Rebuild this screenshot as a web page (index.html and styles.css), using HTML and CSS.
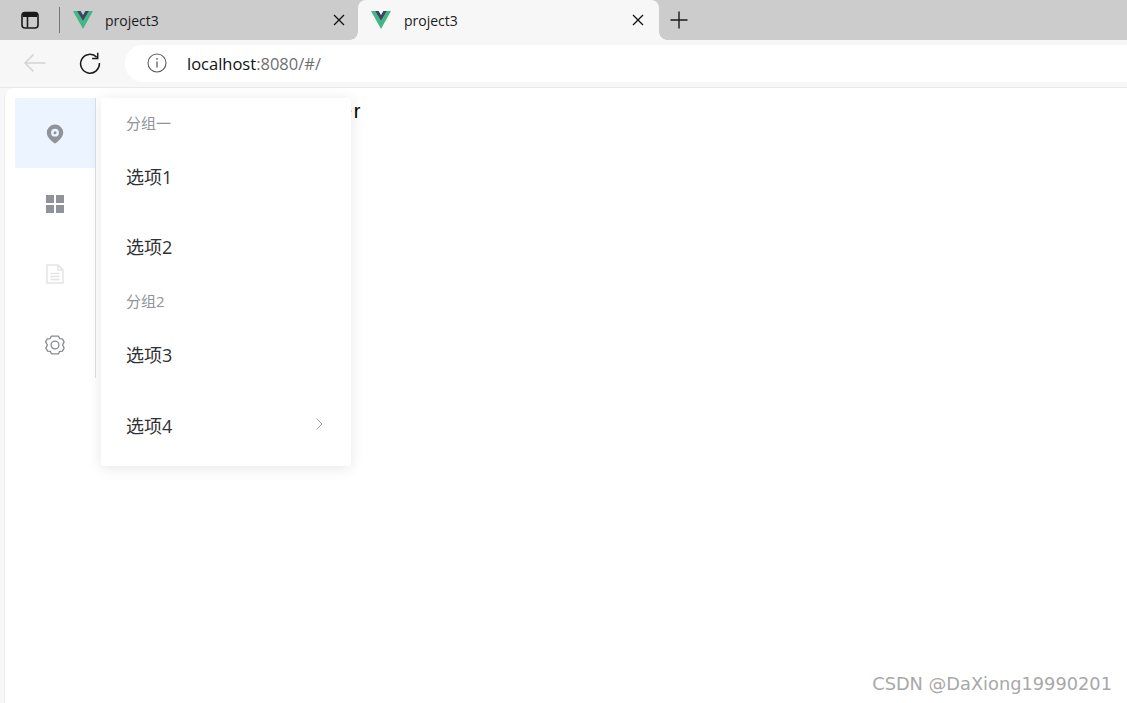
FILE: index.html
```html
<!DOCTYPE html>
<html lang="zh">
<head>
<meta charset="utf-8">
<title>project3</title>
<link rel="stylesheet" href="styles.css">
</head>
<body>
<div class="tabstrip">
  <div class="strip-btn">
    <svg width="20" height="20" viewBox="0 0 20 20"><rect x="2" y="2.5" width="16" height="15.5" rx="3" fill="none" stroke="#1a1a1a" stroke-width="1.6"/><path d="M3 3h14v4H3z" fill="#1a1a1a"/><path d="M7.5 7v10.5" stroke="#1a1a1a" stroke-width="1.6"/></svg>
  </div>
  <div class="strip-sep"></div>
  <div class="tab">
    <svg class="vue" width="20" height="18" viewBox="0 0 20 18"><path d="M0 0h4l6 10 6-10h4L10 18z" fill="#41b883"/><path d="M4 0h3.6L10 4l2.4-4H16l-6 10z" fill="#35495e"/></svg>
    <span class="tab-title">project3</span>
    <svg class="close" width="12" height="12" viewBox="0 0 12 12"><path d="M1 1l10 10M11 1L1 11" stroke="#111" stroke-width="1.3"/></svg>
  </div>
  <div class="tab tab-active">
    <svg class="vue" width="20" height="18" viewBox="0 0 20 18"><path d="M0 0h4l6 10 6-10h4L10 18z" fill="#41b883"/><path d="M4 0h3.6L10 4l2.4-4H16l-6 10z" fill="#35495e"/></svg>
    <span class="tab-title">project3</span>
    <svg class="close" width="12" height="12" viewBox="0 0 12 12"><path d="M1 1l10 10M11 1L1 11" stroke="#111" stroke-width="1.3"/></svg>
  </div>
  <div class="newtab">
    <svg width="18" height="18" viewBox="0 0 18 18"><path d="M9 0.5v17M0.5 9h17" stroke="#1a1a1a" stroke-width="1.4"/></svg>
  </div>
</div>
<div class="toolbar">
  <svg class="tool-back" width="24" height="20" viewBox="0 0 24 20"><path d="M22.500 10H2M10.500 1.500L2 10l8.500 8.500" fill="none" stroke="#d4d4d4" stroke-width="1.500"/></svg>
  <svg class="tool-reload" width="22" height="22" viewBox="0 0 22 22"><path d="M17.800 5.200A9.400 9.400 0 1 0 20.400 11" fill="none" stroke="#1a1a1a" stroke-width="1.500"/><path d="M18.700 0.800v5.600h-5.600" fill="none" stroke="#1a1a1a" stroke-width="1.500"/></svg>
  <div class="address">
    <svg class="info" width="20" height="20" viewBox="0 0 20 20"><circle cx="10" cy="10" r="9" fill="none" stroke="#5c5c5c" stroke-width="1.100"/><path d="M10 8.500v6" stroke="#5c5c5c" stroke-width="1.300"/><circle cx="10" cy="5.800" r="0.900" fill="#5c5c5c"/></svg>
    <span class="host">localhost</span><span class="port">:8080/#/</span>
  </div>
</div>
<div class="viewport">
  <aside class="sidebar">
    <div class="side-item side-item-active">
      <svg width="18" height="20" viewBox="0 0 18 20"><path fill-rule="evenodd" d="M9 .5a8.200 8.200 0 0 1 8.200 8.200c0 4.300-4.700 8.600-8.200 10.800C5.500 17.300.8 13 .8 8.700A8.200 8.200 0 0 1 9 .5zm0 4.300a3.900 3.900 0 1 0 0 7.800 3.900 3.900 0 0 0 0-7.800z" fill="#909399"/><circle cx="9" cy="8.700" r="1.500" fill="#909399"/></svg>
    </div>
    <div class="side-item">
      <svg width="18" height="18" viewBox="0 0 18 18"><path d="M0 0h8v8H0zM10 0h8v8h-8zM0 10h8v8H0zM10 10h8v8h-8z" fill="#909399"/></svg>
    </div>
    <div class="side-item">
      <svg width="18" height="20" viewBox="0 0 18 20"><path d="M1 1h11l5 5v13H1zM12 1v5h5M4.500 9.500h9M4.500 12.500h9M4.500 15.500h9" fill="none" stroke="#e3e3e3" stroke-width="1.400"/></svg>
    </div>
    <div class="side-item side-item-gear">
      <svg width="22" height="22" viewBox="0 0 22 20"><path d="M7.500 1.200h7l1.200 2.400 2.700.2 1.700 3.100-1.500 3.100 1.500 3.100-1.700 3-2.700.2-1.200 2.500h-7l-1.200-2.500-2.700-.2-1.700-3 1.500-3.100L1.600 6.900l1.700-3.100 2.700-.2z" fill="none" stroke="#87898d" stroke-width="1.300" stroke-linejoin="round"/><circle cx="11" cy="10" r="3.900" fill="none" stroke="#87898d" stroke-width="1.300"/></svg>
    </div>
  </aside>
  <main class="main">Main Header</main>
  <div class="popup">
    <div class="group">分组一</div>
    <div class="option">选项1</div>
    <div class="option">选项2</div>
    <div class="group group-second">分组2</div>
    <div class="option option-third">选项3</div>
    <div class="option">选项4
      <svg class="chev" width="8" height="14" viewBox="0 0 8 14"><path d="M1.500 1.500l5.500 5.500-5.500 5.500" fill="none" stroke="#a0a3aa" stroke-width="1"/></svg>
    </div>
  </div>
  <div class="watermark">CSDN @DaXiong19990201</div>
</div>
</body>
</html>
```
FILE: styles.css
```css
* { box-sizing: border-box; }
html, body { margin: 0; height: 100%; overflow: hidden; }
body {
  width: 1127px;
  height: 703px;
  background: #f7f7f7;
  font-family: "Open Sans", "Noto Sans CJK SC", sans-serif;
  display: flex;
  flex-direction: column;
}
.tabstrip {
  height: 40px;
  background: #cccccc;
  display: flex;
  align-items: stretch;
  flex: none;
}
.strip-btn {
  width: 59px;
  display: flex;
  align-items: center;
  padding-left: 20px;
}
.strip-sep {
  width: 1px;
  height: 26px;
  margin-top: 7px;
  background: #777;
}
.tab {
  width: 298px;
  display: flex;
  align-items: center;
  padding: 0 13px 0 13px;
}
.tab-active {
  width: 301px;
  background: #f7f7f7;
  border-radius: 8px 8px 0 0;
  padding: 0 15px 0 13px;
  position: relative;
}
.tab-active::before,
.tab-active::after {
  content: "";
  position: absolute;
  bottom: 0;
  width: 8px;
  height: 8px;
}
.tab-active::before {
  left: -8px;
  background: radial-gradient(circle at 0 0, #cccccc 7.500px, #f7f7f7 8px);
}
.tab-active::after {
  right: -8px;
  background: radial-gradient(circle at 100% 0, #cccccc 7.500px, #f7f7f7 8px);
}
.vue { flex: none; }
.tab-title {
  margin-left: 12px;
  flex: 1;
  font-size: 14px;
  color: #1a1a1a;
}
.tab-active .tab-title { margin-left: 13px; }
.close { flex: none; }
.newtab {
  margin-left: 11px;
  display: flex;
  align-items: center;
}
.toolbar {
  height: 48px;
  flex: none;
  background: #f7f7f7;
  display: flex;
  align-items: center;
  padding: 0 0 1px 23px;
  border-bottom: 1px solid #e9e9e9;
}
.tool-back { flex: none; }
.tool-reload { margin-left: 32px; flex: none; }
.address {
  margin-left: 24px;
  flex: 1;
  height: 37px;
  background: #fff;
  border-radius: 18px 0 0 18px;
  display: flex;
  align-items: center;
  padding-left: 22px;
  font-size: 16.500px;
}
.info { margin-right: 20px; flex: none; }
.host { color: #111; }
.port { color: #6f6f6f; }
.viewport {
  flex: 1;
  margin-left: 4px;
  background: #fff;
  border-top-left-radius: 9px;
  border-left: 1px solid #efefef;
  position: relative;
  display: flex;
  align-items: flex-start;
  padding: 10px 0 0 10px;
}
.sidebar {
  width: 81px;
  flex: none;
  border-right: 1px solid #dcdfe6;
}
.side-item {
  height: 70px;
  display: flex;
  align-items: center;
  justify-content: center;
  padding-top: 2px;
}
.side-item-gear { padding-top: 3px; }
.side-item-active { background: #ecf5ff; }
.main {
  font-size: 20px;
  line-height: 27px;
  color: #000;
  padding-left: 130px;
  letter-spacing: 2px;
  font-family: "Liberation Sans", sans-serif;
}
.popup {
  position: absolute;
  left: 96px;
  top: 10px;
  width: 250px;
  height: 368px;
  padding: 5px 0;
  background: #fff;
  border-radius: 3px;
  box-shadow: 0 2px 14px rgba(0, 0, 0, 0.1);
}
.group {
  height: 39px;
  line-height: 41px;
  padding-left: 25px;
  font-size: 15px;
  color: #909399;
}
.group-second { line-height: 39px; }
.option {
  height: 70px;
  display: flex;
  align-items: center;
  justify-content: space-between;
  padding: 0 28px 3px 25px;
  font-size: 18px;
  color: #303133;
}
.option-third { padding-bottom: 5px; }
.chev { margin-top: -1px; }
.watermark {
  position: absolute;
  right: 15px;
  bottom: 9px;
  font-family: "DejaVu Sans", sans-serif;
  font-size: 17.800px;
  color: #a8a8a8;
}
```
